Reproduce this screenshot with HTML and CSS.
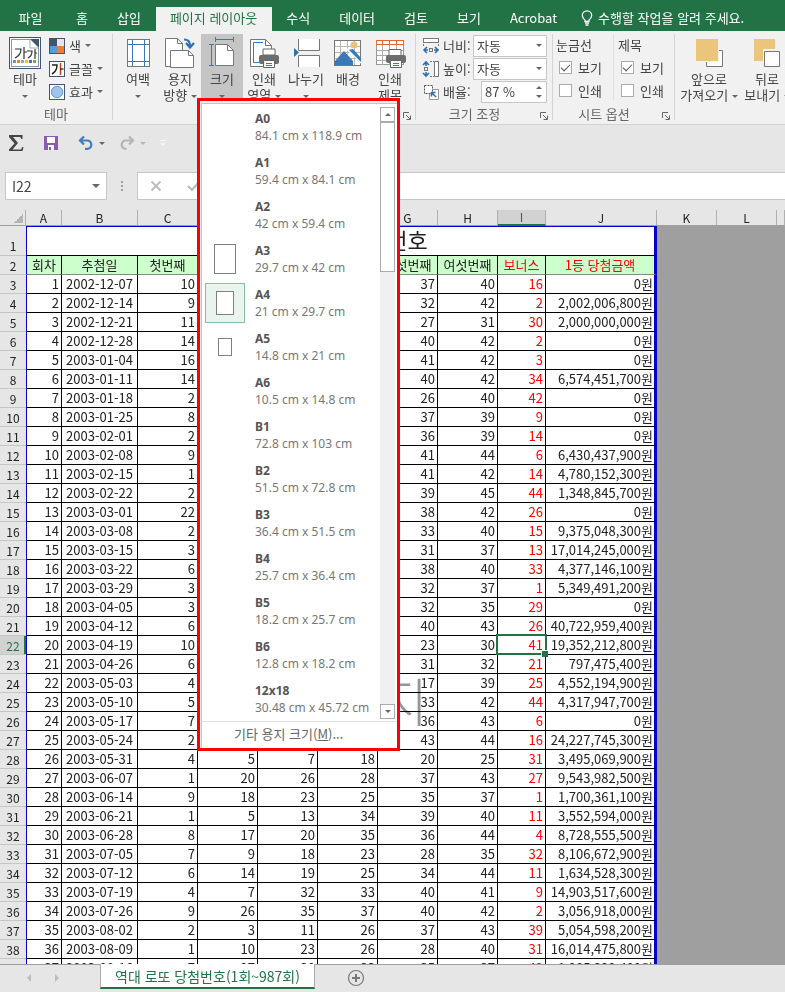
FILE: index.html
```html
<!DOCTYPE html>
<html lang="ko">
  <head>
    <meta charset="UTF-8" />
    <meta name="viewport" content="width=device-width, initial-scale=1.0" />
    <title>역대 로또 당첨번호</title>
    <link rel="stylesheet" href="styles.css">
  </head>
  <body>
    <!-- Ribbon tabs -->
    <nav class="tabs">
      <button class="tab tab-file">파일</button>
      <button class="tab">홈</button>
      <button class="tab">삽입</button>
      <button class="tab active">페이지 레이아웃</button>
      <button class="tab">수식</button>
      <button class="tab">데이터</button>
      <button class="tab">검토</button>
      <button class="tab">보기</button>
      <button class="tab">Acrobat</button>
      <button class="tell-me">
        <svg width="12" height="16" viewBox="0 0 12 16" fill="none" stroke="#fff" stroke-width="1.3"><path d="M4 11.5V10C2.5 8.800 1.300 7.500 1.300 5.500a4.700 4.700 0 0 1 9.400 0C10.700 7.500 9.500 8.800 8 10v1.500zM4 13.200h4M4.500 15h3" /></svg>
        <span>수행할 작업을 알려 주세요.</span>
      </button>
    </nav>

    <!-- Ribbon -->
    <div class="ribbon">
      <section class="group group-theme">
        <div class="group-body">
          <button class="big">
            <svg width="32" height="32" viewBox="0 0 32 32"><rect x="0.500" y="0.500" width="31" height="31" fill="#fff" stroke="#44546a" /><rect x="2.500" y="2.500" width="27" height="27" fill="none" stroke="#8497b0" /><path d="M21 2h9v9z" fill="#44546a" /><path d="M21 2v9h9z" fill="#fff" stroke="#8497b0" stroke-width="0.800" /><path d="M6 12h6q0 6-6 9M15 10v12M15 15h3M18 14h5q0 5-4 7M26 12v10M26 16h2" fill="none" stroke="#333" stroke-width="1.200" /><path d="M4 23h3v3H4z" fill="#5b9bd5" /><path d="M8 23h3v3H8z" fill="#ed7d31" /><path d="M12 23h3v3h-3z" fill="#a5a5a5" /><path d="M16 23h3v3h-3z" fill="#ffc000" /><path d="M20 23h3v3h-3z" fill="#4472c4" /><path d="M24 23h3v3h-3z" fill="#70ad47" /></svg>
            <span>테마</span>
            <span><i class="caret"></i></span>
          </button>
          <div class="small-list">
            <button class="small">
              <svg width="16" height="16" viewBox="0 0 16 16"><path d="M0 0h8v8H0z" fill="#44546a" /><path d="M8 0h8v8H8z" fill="#e7e6e6" /><path d="M0 8h8v8H0z" fill="#5b9bd5" /><path d="M8 8h8v8H8z" fill="#ed7d31" /><rect x="0.500" y="0.500" width="15" height="15" fill="none" stroke="#44546a" /></svg>
              색 <i class="caret"></i>
            </button>
            <button class="small">
              <svg width="16" height="16" viewBox="0 0 16 16"><rect x="0.500" y="0.500" width="15" height="15" fill="#fff" stroke="#44546a" /><path d="M3 4h5q0 6-5 9" fill="none" stroke="#222" stroke-width="1.500" /><path d="M11.500 2v12" stroke="#c43e1c" stroke-width="1.500" /><path d="M11 8h3.500" stroke="#222" stroke-width="1.300" /></svg>
              글꼴 <i class="caret"></i>
            </button>
            <button class="small">
              <svg width="16" height="16" viewBox="0 0 16 16"><rect x="0.500" y="0.500" width="15" height="15" fill="#fff" stroke="#44546a" /><circle cx="8" cy="8" r="5.700" fill="#9dc3ee" stroke="#5b9bd5" /></svg>
              효과 <i class="caret"></i>
            </button>
          </div>
        </div>
        <div class="group-label">테마</div>
      </section>

      <section class="group group-page">
        <div class="group-body">
          <button class="big">
            <svg width="32" height="32" viewBox="0 0 32 32"><rect x="5.500" y="2.500" width="22" height="27" fill="#fff" stroke="#777" /><path d="M10.500 3v26M22.500 3v26M6 7.500h21M6 24.500h21" stroke="#3a78b8" /></svg>
            <span>여백</span>
            <span><i class="caret"></i></span>
          </button>
          <button class="big">
            <svg width="32" height="32" viewBox="0 0 32 32" fill="#fff" stroke="#777"><path d="M1.500 1.500h12l5 5v23h-17z" /><path d="M13.500 1.500v5h5" fill="none" /><path d="M6.500 13.500h18l5 5v12h-23z" /><path d="M24.500 13.500v5h5" fill="none" /><path d="M20 2.500c4 0 6 2 6 6M22 6l4 4.500L30 6" fill="none" stroke="#2e6fb3" stroke-width="2.200" /></svg>
            <span>용지</span>
            <span>방향 <i class="caret"></i></span>
          </button>
          <div class="dropdown">
            <button class="big pressed">
              <svg width="32" height="32" viewBox="0 0 32 32"><path d="M9.500 7.500h12l6 6v15h-18z" fill="#fff" stroke="#777" /><path d="M21.500 7.500v6h6" fill="none" stroke="#777" /><path d="M9 2.500h19M9.500 0v5M27.500 0v5M5.500 7v21M3 7.500h5M3 28.500h5" fill="none" stroke="#3a78b8" /></svg>
              <span>크기</span>
              <span><i class="caret"></i></span>
            </button>

            <!-- Paper size menu -->
            <div class="size-menu">
              <div class="size-panel">
                <ul class="size-list">
                  <li><button class="size"><span class="tile"></span><span><b>A0</b><br>84.1 cm x 118.9 cm</span></button></li>
                  <li><button class="size"><span class="tile"></span><span><b>A1</b><br>59.4 cm x 84.1 cm</span></button></li>
                  <li><button class="size"><span class="tile"></span><span><b>A2</b><br>42 cm x 59.4 cm</span></button></li>
                  <li><button class="size"><span class="tile"><i class="paper paper-a3"></i></span><span><b>A3</b><br>29.7 cm x 42 cm</span></button></li>
                  <li><button class="size selected"><span class="tile"><i class="paper paper-a4"></i></span><span><b>A4</b><br>21 cm x 29.7 cm</span></button></li>
                  <li><button class="size"><span class="tile"><i class="paper paper-a5"></i></span><span><b>A5</b><br>14.8 cm x 21 cm</span></button></li>
                  <li><button class="size"><span class="tile"></span><span><b>A6</b><br>10.5 cm x 14.8 cm</span></button></li>
                  <li><button class="size"><span class="tile"></span><span><b>B1</b><br>72.8 cm x 103 cm</span></button></li>
                  <li><button class="size"><span class="tile"></span><span><b>B2</b><br>51.5 cm x 72.8 cm</span></button></li>
                  <li><button class="size"><span class="tile"></span><span><b>B3</b><br>36.4 cm x 51.5 cm</span></button></li>
                  <li><button class="size"><span class="tile"></span><span><b>B4</b><br>25.7 cm x 36.4 cm</span></button></li>
                  <li><button class="size"><span class="tile"></span><span><b>B5</b><br>18.2 cm x 25.7 cm</span></button></li>
                  <li><button class="size"><span class="tile"></span><span><b>B6</b><br>12.8 cm x 18.2 cm</span></button></li>
                  <li><button class="size"><span class="tile"></span><span><b>12x18</b><br>30.48 cm x 45.72 cm</span></button></li>
                </ul>
                <div class="scrollbar">
                  <span class="scroll-arrow"><i class="caret up"></i></span>
                  <span class="scroll-thumb"></span>
                  <span class="scroll-arrow scroll-down"><i class="caret"></i></span>
                </div>
              </div>
              <button class="more-sizes">기타 용지 크기(<u>M</u>)...</button>
            </div>
          </div>
          <button class="big">
            <svg width="32" height="32" viewBox="0 0 32 32"><path d="M2.500 2.500h15l6 6v21h-21z" fill="#fff" stroke="#777" /><path d="M17.500 2.500v6h6" fill="none" stroke="#777" /><path d="M15 5.500H5.500v20H11" fill="none" stroke="#3a78b8" /><path d="M15 12h12v6H15z" fill="#fff" stroke="#666" /><rect x="11" y="18" width="20" height="9" rx="2" fill="#6d6d6d" /><path d="M15.500 23.500h11v7h-11z" fill="#fff" stroke="#666" /><path d="M18 26.500h6M18 28.500h6" stroke="#3a78b8" /></svg>
            <span>인쇄</span>
            <span>영역 <i class="caret"></i></span>
          </button>
          <button class="big">
            <svg width="32" height="32" viewBox="0 0 32 32"><path d="M8.500 2v11.500h21V2M8.500 30V18.500h21V30" fill="#fff" stroke="#777" /><path d="M4 11l5 4.500L4 20z" fill="#2e6fb3" /></svg>
            <span>나누기</span>
            <span><i class="caret"></i></span>
          </button>
          <button class="big">
            <svg width="32" height="32" viewBox="0 0 32 32"><rect x="2.500" y="3.500" width="26" height="25" fill="#fff" stroke="#777" /><path d="M8.500 4v24M15.500 4v24M22.500 4v24M3 9.500h25M3 15.500h25M3 21.500h25" stroke="#b5b5b5" /><circle cx="22" cy="8" r="3.500" fill="#ecc17c" /><path d="M3 24l9-10 9 10v4H3zM16 13l5-1 8 9v6z" fill="#3a78b8" /><path d="M15 12l14 14" stroke="#fff" stroke-width="1.500" /></svg>
            <span>배경</span>
          </button>
          <button class="big">
            <svg width="32" height="32" viewBox="0 0 32 32"><rect x="2.500" y="3.500" width="27" height="24" fill="#fff" stroke="#999" /><path d="M8.500 8v20M15.500 8v20M22.500 8v20M3 13.500h26M3 18.500h26M3 23.500h26" stroke="#aaa" /><path d="M2.500 3.500h27v4h-27zM8.500 3v5M15.500 3v5M22.500 3v5" fill="#fff" stroke="#e0653a" /><path d="M15 12.500h12V19H15z" fill="#fff" stroke="#666" /><rect x="12" y="18" width="20" height="8" rx="2" fill="#6d6d6d" /><path d="M16.500 23.500h11v7h-11z" fill="#fff" stroke="#666" /><path d="M19 26.500h6M19 28.500h6" stroke="#3a78b8" /></svg>
            <span>인쇄</span>
            <span>제목</span>
          </button>
        </div>
        <div class="group-label">페이지 설정</div>
        <svg class="launcher" width="8" height="8" viewBox="0 0 8 8" fill="none" stroke="#666"><path d="M0.500 6V0.500H6M3 3l4 4M7.500 3.500v4h-4" /></svg>
      </section>

      <section class="group group-scale">
        <div class="group-body fields">
          <div class="field">
            <svg width="18" height="18" viewBox="0 0 18 18"><path d="M1.500 1.500h15v4h-15z" fill="#fff" stroke="#777" /><path d="M1.500 1v8M16.500 1v8" stroke="#777" stroke-dasharray="2 1" /><path d="M5 10l-3 3 3 3M2 13h4M13 10l3 3-3 3M16 13h-4" fill="none" stroke="#2e6fb3" stroke-width="1.600" /><rect x="7.500" y="11.500" width="3" height="3" fill="none" stroke="#777" /></svg>
            <label for="fit-width">너비:</label>
            <span class="select-wrap"><select id="fit-width"><option>자동</option></select><i class="caret"></i></span>
          </div>
          <div class="field">
            <svg width="18" height="18" viewBox="0 0 18 18"><path d="M12.500 1.500h4v15h-4z" fill="#fff" stroke="#777" /><path d="M8 1.500h4M8 16.500h4" stroke="#777" stroke-dasharray="2 1" /><path d="M1 5l3-3 3 3M4 2v4M1 13l3 3 3-3M4 16v-4" fill="none" stroke="#2e6fb3" stroke-width="1.600" /><rect x="2.500" y="7.500" width="3" height="3" fill="none" stroke="#777" /></svg>
            <label for="fit-height">높이:</label>
            <span class="select-wrap"><select id="fit-height"><option>자동</option></select><i class="caret"></i></span>
          </div>
          <div class="field">
            <svg width="18" height="18" viewBox="0 0 18 18"><path d="M11 6.500h5.500v10h-9V11" fill="#fff" stroke="#999" /><rect x="2.500" y="2.500" width="8" height="8" fill="#fff" stroke="#555" stroke-dasharray="2 1" /><path d="M14 14l-4-4M9.500 13.500v-4h4" fill="none" stroke="#2e6fb3" stroke-width="1.600" /></svg>
            <label for="scale">배율:</label>
            <span class="spin-wrap"><input type="text" id="scale" value="87 %" /><span class="spin"><i class="caret up"></i><i class="caret"></i></span></span>
          </div>
        </div>
        <div class="group-label">크기 조정</div>
        <svg class="launcher" width="8" height="8" viewBox="0 0 8 8" fill="none" stroke="#666"><path d="M0.500 6V0.500H6M3 3l4 4M7.500 3.500v4h-4" /></svg>
      </section>

      <section class="group group-sheet">
        <div class="group-body">
          <div class="checks">
            <span>눈금선</span>
            <label><input type="checkbox" checked />보기</label>
            <label><input type="checkbox" />인쇄</label>
          </div>
          <div class="checks">
            <span>제목</span>
            <label><input type="checkbox" checked />보기</label>
            <label><input type="checkbox" />인쇄</label>
          </div>
        </div>
        <div class="group-label">시트 옵션</div>
        <svg class="launcher" width="8" height="8" viewBox="0 0 8 8" fill="none" stroke="#666"><path d="M0.500 6V0.500H6M3 3l4 4M7.500 3.500v4h-4" /></svg>
      </section>

      <section class="group group-arrange">
        <div class="group-body">
          <button class="big">
            <svg width="32" height="32" viewBox="0 0 32 32"><path d="M13.500 13.500h16v16h-16z" fill="#fff" stroke="#777" /><path d="M2 1h24v24H2z" fill="#f1f1f1" /><path d="M3 2h22v22H3z" fill="#ecc57c" /></svg>
            <span>앞으로</span>
            <span>가져오기 <i class="caret"></i></span>
          </button>
          <button class="big">
            <svg width="32" height="32" viewBox="0 0 32 32"><path d="M3 2h21v22H3z" fill="#ecc57c" /><path d="M12 12h18v19H12z" fill="#f1f1f1" /><path d="M13.500 14.500h15v15h-15z" fill="#fff" stroke="#777" /></svg>
            <span>뒤로</span>
            <span>보내기 <i class="caret"></i></span>
          </button>
        </div>
      </section>
    </div>

    <!-- Quick access toolbar -->
    <div class="quick">
      <button aria-label="합계"><svg width="16" height="18" viewBox="0 0 16 18"><path d="M1 1h13.500v4h-1.200l-1-2H5l5 6-5.500 6.500H13l1.300-2.500h1.200L14.500 17H1v-1.500L6.500 9.500 1 3z" fill="#444" /></svg></button>
      <button class="save" aria-label="저장"><svg width="14" height="14" viewBox="0 0 14 14"><path d="M0 0h14v14H0z" fill="#8a5bb0" /><path d="M3 1h8v6H3zM4 9h6v5H4z" fill="#fff" /><path d="M5 11h2v3H5z" fill="#8a5bb0" /></svg></button>
      <button aria-label="실행 취소"><svg width="16" height="16" viewBox="0 0 16 16" fill="none" stroke="#3f7fbf" stroke-width="2.200"><path d="M6 1.500L2 5.500l4 4M2.500 5.500H9a4.200 4.200 0 0 1 1 8.300H7" /></svg><i class="caret"></i></button>
      <button class="redo" aria-label="다시 실행"><svg width="16" height="16" viewBox="0 0 16 16" fill="none" stroke="#b4b4b4" stroke-width="2.200"><path d="M10 1.500l4 4-4 4M13.500 5.500H7a4.200 4.200 0 0 0-1 8.300h1.500" /></svg><i class="caret"></i></button>
      <button class="customize" aria-label="빠른 실행 도구 모음 사용자 지정"><svg width="6" height="7" viewBox="0 0 6 7" fill="#f6f6f6"><path d="M0 0h6v1H0zM0 3h6L3 6z" /></svg></button>
    </div>

    <!-- Formula bar -->
    <div class="formula-bar">
      <div class="name-box">
        <input type="text" value="I22" aria-label="이름 상자" />
        <i class="caret"></i>
      </div>
      <svg class="dots" width="4" height="12" viewBox="0 0 4 12" fill="#a0a0a0"><path d="M1 1h2v2H1zM1 5h2v2H1zM1 9h2v2H1z" /></svg>
      <div class="formula">
        <svg width="12" height="12" viewBox="0 0 12 12" fill="none" stroke="#bbb" stroke-width="1.800"><path d="M1.500 1.500l9 9M10.500 1.500l-9 9" /></svg>
        <svg width="14" height="12" viewBox="0 0 14 12" fill="none" stroke="#bbb" stroke-width="2.200"><path d="M2 6l4 4 7-8" /></svg>
        <input type="text" aria-label="수식 입력줄" />
      </div>
    </div>

    <!-- Worksheet -->
    <main class="sheet">
      <div class="watermark">1 페이지</div>
      <table>
        <colgroup>
          <col class="w-head"><col class="w-a"><col class="w-b"><col class="w-n"><col class="w-n"><col class="w-n"><col class="w-n"><col class="w-n"><col class="w-n"><col class="w-i"><col class="w-j"><col class="w-n"><col class="w-n"><col>
        </colgroup>
        <thead>
          <tr><th class="corner"></th><th>A</th><th>B</th><th>C</th><th>D</th><th>E</th><th>F</th><th>G</th><th>H</th><th class="current">I</th><th>J</th><th>K</th><th>L</th><th></th></tr>
        </thead>
        <tbody>
          <tr class="title-row"><th>1</th><td colspan="10">역대 로또 당첨번호</td><td class="outside" colspan="3" rowspan="39"></td></tr>
          <tr class="label-row"><th>2</th><td>회차</td><td>추첨일</td><td>첫번째</td><td>두번째</td><td>세번째</td><td>네번째</td><td>다섯번째</td><td>여섯번째</td><td>보너스</td><td>1등 당첨금액</td></tr>
          <tr><th>3</th><td>1</td><td>2002-12-07</td><td>10</td><td></td><td></td><td></td><td>37</td><td>40</td><td>16</td><td>0원</td></tr>
          <tr><th>4</th><td>2</td><td>2002-12-14</td><td>9</td><td></td><td></td><td></td><td>32</td><td>42</td><td>2</td><td>2,002,006,800원</td></tr>
          <tr><th>5</th><td>3</td><td>2002-12-21</td><td>11</td><td></td><td></td><td></td><td>27</td><td>31</td><td>30</td><td>2,000,000,000원</td></tr>
          <tr><th>6</th><td>4</td><td>2002-12-28</td><td>14</td><td></td><td></td><td></td><td>40</td><td>42</td><td>2</td><td>0원</td></tr>
          <tr><th>7</th><td>5</td><td>2003-01-04</td><td>16</td><td></td><td></td><td></td><td>41</td><td>42</td><td>3</td><td>0원</td></tr>
          <tr><th>8</th><td>6</td><td>2003-01-11</td><td>14</td><td></td><td></td><td></td><td>40</td><td>42</td><td>34</td><td>6,574,451,700원</td></tr>
          <tr><th>9</th><td>7</td><td>2003-01-18</td><td>2</td><td></td><td></td><td></td><td>26</td><td>40</td><td>42</td><td>0원</td></tr>
          <tr><th>10</th><td>8</td><td>2003-01-25</td><td>8</td><td></td><td></td><td></td><td>37</td><td>39</td><td>9</td><td>0원</td></tr>
          <tr><th>11</th><td>9</td><td>2003-02-01</td><td>2</td><td></td><td></td><td></td><td>36</td><td>39</td><td>14</td><td>0원</td></tr>
          <tr><th>12</th><td>10</td><td>2003-02-08</td><td>9</td><td></td><td></td><td></td><td>41</td><td>44</td><td>6</td><td>6,430,437,900원</td></tr>
          <tr><th>13</th><td>11</td><td>2003-02-15</td><td>1</td><td></td><td></td><td></td><td>41</td><td>42</td><td>14</td><td>4,780,152,300원</td></tr>
          <tr><th>14</th><td>12</td><td>2003-02-22</td><td>2</td><td></td><td></td><td></td><td>39</td><td>45</td><td>44</td><td>1,348,845,700원</td></tr>
          <tr><th>15</th><td>13</td><td>2003-03-01</td><td>22</td><td></td><td></td><td></td><td>38</td><td>42</td><td>26</td><td>0원</td></tr>
          <tr><th>16</th><td>14</td><td>2003-03-08</td><td>2</td><td></td><td></td><td></td><td>33</td><td>40</td><td>15</td><td>9,375,048,300원</td></tr>
          <tr><th>17</th><td>15</td><td>2003-03-15</td><td>3</td><td></td><td></td><td></td><td>31</td><td>37</td><td>13</td><td>17,014,245,000원</td></tr>
          <tr><th>18</th><td>16</td><td>2003-03-22</td><td>6</td><td></td><td></td><td></td><td>38</td><td>40</td><td>33</td><td>4,377,146,100원</td></tr>
          <tr><th>19</th><td>17</td><td>2003-03-29</td><td>3</td><td></td><td></td><td></td><td>32</td><td>37</td><td>1</td><td>5,349,491,200원</td></tr>
          <tr><th>20</th><td>18</td><td>2003-04-05</td><td>3</td><td></td><td></td><td></td><td>32</td><td>35</td><td>29</td><td>0원</td></tr>
          <tr><th>21</th><td>19</td><td>2003-04-12</td><td>6</td><td></td><td></td><td></td><td>40</td><td>43</td><td>26</td><td>40,722,959,400원</td></tr>
          <tr><th class="current">22</th><td>20</td><td>2003-04-19</td><td>10</td><td></td><td></td><td></td><td>23</td><td>30</td><td class="cursor">41</td><td>19,352,212,800원</td></tr>
          <tr><th>23</th><td>21</td><td>2003-04-26</td><td>6</td><td></td><td></td><td></td><td>31</td><td>32</td><td>21</td><td>797,475,400원</td></tr>
          <tr><th>24</th><td>22</td><td>2003-05-03</td><td>4</td><td></td><td></td><td></td><td>17</td><td>39</td><td>25</td><td>4,552,194,900원</td></tr>
          <tr><th>25</th><td>23</td><td>2003-05-10</td><td>5</td><td></td><td></td><td></td><td>33</td><td>42</td><td>44</td><td>4,317,947,700원</td></tr>
          <tr><th>26</th><td>24</td><td>2003-05-17</td><td>7</td><td></td><td></td><td></td><td>36</td><td>43</td><td>6</td><td>0원</td></tr>
          <tr><th>27</th><td>25</td><td>2003-05-24</td><td>2</td><td></td><td></td><td></td><td>43</td><td>44</td><td>16</td><td>24,227,745,300원</td></tr>
          <tr><th>28</th><td>26</td><td>2003-05-31</td><td>4</td><td>5</td><td>7</td><td>18</td><td>20</td><td>25</td><td>31</td><td>3,495,069,900원</td></tr>
          <tr><th>29</th><td>27</td><td>2003-06-07</td><td>1</td><td>20</td><td>26</td><td>28</td><td>37</td><td>43</td><td>27</td><td>9,543,982,500원</td></tr>
          <tr><th>30</th><td>28</td><td>2003-06-14</td><td>9</td><td>18</td><td>23</td><td>25</td><td>35</td><td>37</td><td>1</td><td>1,700,361,100원</td></tr>
          <tr><th>31</th><td>29</td><td>2003-06-21</td><td>1</td><td>5</td><td>13</td><td>34</td><td>39</td><td>40</td><td>11</td><td>3,552,594,000원</td></tr>
          <tr><th>32</th><td>30</td><td>2003-06-28</td><td>8</td><td>17</td><td>20</td><td>35</td><td>36</td><td>44</td><td>4</td><td>8,728,555,500원</td></tr>
          <tr><th>33</th><td>31</td><td>2003-07-05</td><td>7</td><td>9</td><td>18</td><td>23</td><td>28</td><td>35</td><td>32</td><td>8,106,672,900원</td></tr>
          <tr><th>34</th><td>32</td><td>2003-07-12</td><td>6</td><td>14</td><td>19</td><td>25</td><td>34</td><td>44</td><td>11</td><td>1,634,528,300원</td></tr>
          <tr><th>35</th><td>33</td><td>2003-07-19</td><td>4</td><td>7</td><td>32</td><td>33</td><td>40</td><td>41</td><td>9</td><td>14,903,517,600원</td></tr>
          <tr><th>36</th><td>34</td><td>2003-07-26</td><td>9</td><td>26</td><td>35</td><td>37</td><td>40</td><td>42</td><td>2</td><td>3,056,918,000원</td></tr>
          <tr><th>37</th><td>35</td><td>2003-08-02</td><td>2</td><td>3</td><td>11</td><td>26</td><td>37</td><td>43</td><td>39</td><td>5,054,598,200원</td></tr>
          <tr><th>38</th><td>36</td><td>2003-08-09</td><td>1</td><td>10</td><td>23</td><td>26</td><td>28</td><td>40</td><td>31</td><td>16,014,475,800원</td></tr>
          <tr><th>39</th><td>37</td><td>2003-08-16</td><td>7</td><td>27</td><td>30</td><td>33</td><td>35</td><td>37</td><td>42</td><td>1,985,229,400원</td></tr>
        </tbody>
      </table>
    </main>

    <!-- Sheet tabs -->
    <footer class="sheet-bar">
      <span class="sheet-nav">
        <svg width="4" height="8" viewBox="0 0 4 8"><path d="M4 0v8L0 4z" fill="#bbb" /></svg>
        <svg width="4" height="8" viewBox="0 0 4 8"><path d="M0 0v8l4-4z" fill="#bbb" /></svg>
      </span>
      <button class="sheet-tab">역대 로또 당첨번호(1회~987회)</button>
      <button class="add-sheet" aria-label="새 시트"><svg width="18" height="18" viewBox="0 0 18 18" fill="none" stroke="#777"><circle cx="9" cy="9" r="7.500" stroke-width="1.200" /><path d="M9 5v8M5 9h8" stroke-width="2" /></svg></button>
    </footer>
  </body>
</html>
```

FILE: styles.css
```css
* {
  box-sizing: border-box;
}

body {
  margin: 0;
  height: 100vh;
  display: flex;
  flex-direction: column;
  overflow: hidden;
  background: #e6e6e6;
  color: #444;
  font-family: "Noto Sans CJK KR", "Noto Sans", sans-serif;
  font-size: 13px;
  line-height: 16px;
}

button,
input,
select {
  font: inherit;
  color: inherit;
  border: none;
  background: none;
  padding: 0;
  margin: 0;
  outline: none;
}

svg {
  display: block;
  flex: none;
}

/* Small drop-down triangle */
.caret {
  display: inline-block;
  flex: none;
  border: 3px solid transparent;
  border-top-color: #666;
  border-bottom: none;
  vertical-align: middle;
}

.caret.up {
  border-top: none;
  border-bottom: 3px solid #666;
}

/* Ribbon tabs */
.tabs {
  flex: none;
  display: flex;
  align-items: flex-end;
  height: 31px;
  background: #217346;
  color: #fff;
}

.tab {
  height: 24px;
  padding: 0 15px 2px 14px;
  white-space: nowrap;
}

.tab-file {
  width: 62px;
}

.tab.active {
  background: #f1f1f1;
  color: #217346;
}

.tell-me {
  display: flex;
  align-items: center;
  gap: 5px;
  height: 24px;
  padding-left: 9px;
  padding-bottom: 2px;
  white-space: nowrap;
}

/* Ribbon */
.ribbon {
  flex: none;
  display: flex;
  height: 94px;
  padding-top: 3px;
  background: #f1f1f1;
  border-bottom: 1px solid #d2d2d2;
}

.group {
  flex: none;
  position: relative;
  display: flex;
  flex-direction: column;
  margin-bottom: 4px;
  border-right: 1px solid #d4d4d4;
}

.group-body {
  flex: 1;
  display: flex;
}

.group-label {
  height: 16px;
  line-height: 20px;
  text-align: center;
  color: #666;
}

.group-scale .group-label,
.group-sheet .group-label {
  padding-right: 19px;
}

.launcher {
  position: absolute;
  right: 4px;
  bottom: 0;
}

.big {
  display: flex;
  flex-direction: column;
  align-items: center;
  width: 42px;
  height: 69px;
  padding-top: 3px;
  white-space: nowrap;
}

.big svg {
  margin-bottom: 2px;
}

.big.pressed {
  background: #c5c5c5;
}

.small {
  display: flex;
  align-items: center;
  gap: 4px;
  height: 23px;
}

.group-theme {
  width: 113px;
}

.group-theme .group-body {
  padding-left: 4px;
  gap: 3px;
}

.group-page {
  width: 303px;
}

.group-page .group-body {
  padding-left: 4px;
}

.group-scale {
  width: 137px;
}

.fields {
  flex-direction: column;
  padding: 0 5px 0 6px;
}

.field {
  display: flex;
  align-items: center;
  justify-content: space-between;
  height: 23px;
}

.field label {
  margin-right: auto;
  padding-left: 3px;
}

.select-wrap,
.spin-wrap {
  display: flex;
  align-items: center;
  height: 22px;
  padding-right: 4px;
  background: #fff;
  border: 1px solid #c6c6c6;
}

.select-wrap {
  width: 74px;
}

.spin-wrap {
  width: 66px;
}

.select-wrap select,
.spin-wrap input {
  flex: 1;
  min-width: 0;
  padding-left: 3px;
  appearance: none;
}

.spin {
  display: flex;
  flex-direction: column;
  gap: 6px;
}

.group-sheet {
  width: 122px;
}

.group-sheet .group-body {
  padding-left: 3px;
}

.checks {
  width: 57px;
  line-height: 22px;
}

.checks + .checks {
  width: 61px;
  height: 66px;
  padding-left: 4px;
  border-left: 1px solid #e0e0e0;
}

.checks label {
  display: flex;
  align-items: center;
  gap: 6px;
  height: 23px;
  padding-left: 3px;
}

.checks input {
  appearance: none;
  flex: none;
  width: 13px;
  height: 13px;
  display: grid;
  place-items: center;
  background: #fff;
  border: 1px solid #ababab;
}

.checks input:checked::before {
  content: "";
  width: 8px;
  height: 4px;
  margin-bottom: 2px;
  border: solid #555;
  border-width: 0 0 1px 1px;
  transform: rotate(-45deg);
}

.group-arrange {
  border-right: none;
}

.group-arrange .group-body {
  padding-left: 5px;
}

.group-arrange .big {
  width: 58px;
}

/* Paper size menu */
.dropdown {
  position: relative;
}

.size-menu {
  position: absolute;
  left: -4px;
  top: 64px;
  z-index: 10;
  width: 203px;
  padding: 2px 0 0 1px;
  border: 3px solid #f00;
  background: #f1f1f1;
}

.size-panel {
  display: flex;
  padding: 1px 2px 0 0;
  background: #fff;
  border-top: 1px solid #c6c6c6;
  border-left: 1px solid #c6c6c6;
}

.size-list {
  flex: 1;
  margin: 0;
  padding: 0;
  list-style: none;
}

.size {
  display: flex;
  align-items: center;
  gap: 10px;
  height: 44px;
  padding-left: 3px;
  font-family: "Noto Sans", sans-serif;
  font-size: 12px;
  line-height: 17px;
  text-align: left;
  white-space: nowrap;
  color: #777;
}

.size b {
  color: #555;
}

.tile {
  display: grid;
  place-items: center;
  width: 40px;
  height: 40px;
}

.selected .tile {
  background: #e9f4ee;
  border: 1px solid #86bfa0;
}

.paper {
  background: #fff;
  border: 1px solid #808080;
}

.paper-a3 {
  width: 22px;
  height: 30px;
}

.paper-a4 {
  width: 18px;
  height: 24px;
}

.paper-a5 {
  width: 14px;
  height: 18px;
}

.scrollbar {
  display: flex;
  flex-direction: column;
  width: 15px;
  margin: 2px 0;
  background: #f0f0f0;
}

.scroll-arrow {
  display: grid;
  place-items: center;
  height: 15px;
  background: #fff;
  border: 1px solid #ababab;
}

.scroll-thumb {
  height: 150px;
  background: #fff;
  border: 1px solid #ababab;
}

.scroll-down {
  margin-top: auto;
}

.more-sizes {
  display: block;
  width: 100%;
  height: 27px;
  padding-left: 32px;
  padding-bottom: 2px;
  text-align: left;
  color: #666;
  background: #fff;
  border-top: 1px solid #e1e1e1;
  border-left: 1px solid #c6c6c6;
}

/* Quick access toolbar */
.quick {
  flex: none;
  display: flex;
  align-items: center;
  height: 47px;
  padding: 0 8px 11px 8px;
  gap: 20px;
}

.quick button {
  display: flex;
  align-items: center;
  gap: 5px;
}

.quick .redo,
.quick .customize {
  margin-left: -6px;
}

.redo .caret {
  border-top-color: #b4b4b4;
}

/* Formula bar */
.formula-bar {
  flex: none;
  display: flex;
  align-items: center;
  height: 28px;
  margin-bottom: 10px;
  padding-left: 5px;
}

.name-box {
  display: flex;
  align-items: center;
  width: 102px;
  height: 28px;
  padding: 0 6px;
  font-size: 14px;
  background: #fff;
  border: 1px solid #c6c6c6;
}

.name-box input {
  flex: 1;
  min-width: 0;
}

.name-box .caret {
  border-width: 4px 4px 0 4px;
}

.dots {
  margin: 0 13px;
}

.formula {
  flex: 1;
  display: flex;
  align-items: center;
  gap: 24px;
  height: 28px;
  padding-left: 12px;
  background: #fff;
  border: 1px solid #c6c6c6;
  border-right: none;
}

.formula input {
  flex: 1;
}

/* Worksheet */
.sheet {
  flex: 1;
  min-height: 0;
  position: relative;
  overflow: hidden;
  background: #fff;
}

table {
  width: 100%;
  table-layout: fixed;
  border-collapse: separate;
  border-spacing: 0;
  color: #222;
}

.w-head { width: 26px; }
.w-a { width: 36px; }
.w-b { width: 76px; }
.w-n { width: 60px; }
.w-i { width: 48px; }
.w-j { width: 111px; }

th {
  height: 19px;
  padding: 2px 0 0;
  background: #e6e6e6;
  border-bottom: 1px solid #c6c6c6;
  font-size: 12px;
  font-weight: normal;
}

thead th {
  height: 16px;
  padding: 0;
  line-height: 15px;
  border-right: 1px solid #b0b0b0;
  border-bottom-color: #9f9f9f;
}

.corner {
  background: linear-gradient(135deg, #e6e6e6 50%, #b4b4b4 50%) 14px 4px / 9px 9px no-repeat #e6e6e6;
}

th.current {
  background: #d2d2d2;
  color: #217346;
}

thead th.current {
  border-bottom: 2px solid #217346;
  line-height: 14px;
}

tbody th.current {
  box-shadow: inset -2px 0 #217346;
}

td {
  height: 19px;
  padding: 0 2px 0 0;
  line-height: 18px;
  text-align: right;
  white-space: nowrap;
  border-right: 1px solid #000;
  border-bottom: 1px solid #000;
}

td:nth-child(2) {
  border-left: 1px solid #0000cc;
}

td:nth-child(3) {
  padding: 0;
  text-align: center;
}

td:nth-child(10) {
  color: #f00;
}

td:nth-child(11) {
  padding-right: 1px;
  border-right: 3px solid #0000cc;
}

.title-row th {
  height: 30px;
  padding: 0 0 1px;
  vertical-align: bottom;
}

.title-row td {
  padding: 0;
  border-top: 1px solid #0000cc;
  border-right: 3px solid #0000cc;
  font-size: 22px;
  line-height: 24px;
  text-align: center;
  vertical-align: top;
}

.title-row .outside {
  background: #9f9f9f;
  border: none;
}

.label-row td {
  padding: 0;
  background: #ccffcc;
  border-bottom-color: #888;
  text-align: center;
}

.label-row td:nth-child(11) {
  color: #f00;
}

/* Active cell with its fill handle */
.cursor {
  position: relative;
}

.cursor::before {
  content: "";
  position: absolute;
  inset: -2px -2px -1px -2px;
  border: 2px solid #217346;
}

.cursor::after {
  content: "";
  position: absolute;
  right: -3px;
  bottom: -3px;
  width: 6px;
  height: 6px;
  background: #217346;
  border: solid #fff;
  border-width: 1px 0 0 1px;
}

.watermark {
  position: absolute;
  left: 242px;
  top: 450px;
  font-size: 52px;
  font-weight: 300;
  line-height: 80px;
  color: #969696;
  mix-blend-mode: multiply;
  white-space: nowrap;
}

/* Sheet tabs */
.sheet-bar {
  flex: none;
  display: flex;
  align-items: flex-start;
  height: 28px;
  border-top: 1px solid #9f9f9f;
}

.sheet-nav {
  display: flex;
  align-items: center;
  justify-content: center;
  gap: 24px;
  width: 100px;
  height: 26px;
  padding-right: 14px;
}

.sheet-tab {
  height: 25px;
  margin-top: -1px;
  padding: 0 14px;
  font-size: 14px;
  color: #217346;
  background: #fff;
  border: 1px solid #ababab;
  border-width: 0 1px 2px 1px;
  border-bottom-color: #217346;
}

.add-sheet {
  margin: 4px 0 0 32px;
}
```
